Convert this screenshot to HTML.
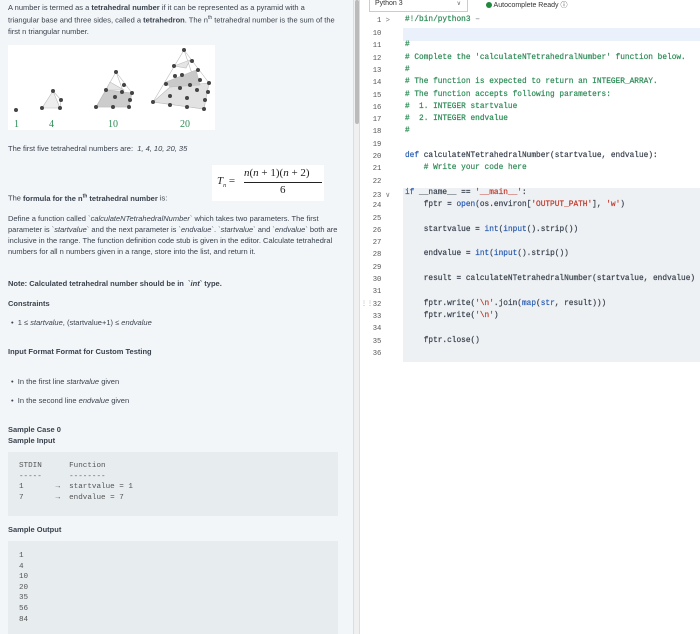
<!DOCTYPE html>
<html><head><meta charset="utf-8"><style>
*{margin:0;padding:0;box-sizing:border-box}
body{width:700px;height:634px;overflow:hidden;background:#fff;font-family:"Liberation Sans",sans-serif;position:relative}
#left{position:absolute;left:0;top:0;width:353px;height:634px;background:#f3f6f8;color:#39424e;font-size:7.5px;line-height:11px}
.p{position:absolute;left:8px;width:330px}
b{font-weight:bold}
i{font-style:italic}
.box{position:absolute;left:8px;width:330px;background:#e7ecef;font-family:"Liberation Mono",monospace;font-size:7.6px;line-height:10.6px;color:#555;padding:8px 11px;white-space:pre}
#sb{position:absolute;left:353px;top:0;width:7px;height:634px;background:#f0f0f0;border-left:1px solid #ddd;border-right:1px solid #ddd}
#sb div{position:absolute;left:1px;top:0;width:4px;height:124px;background:#bbb;border-radius:2px}
#right{position:absolute;left:361px;top:0;width:339px;height:634px;background:#fff}
.code{position:absolute;font-family:"Liberation Mono",monospace;font-size:7.8px;white-space:pre;color:#39424e;-webkit-text-stroke:0.2px}
.ln{position:absolute;left:0;width:29px;text-align:right;font-family:"Liberation Mono",monospace;font-size:7.2px;color:#555}
.c{color:#2e8b57}.k{color:#2a5db0}.s{color:#c0392b}
</style></head><body>
<div id="left">
<div class="p" style="top:2px">A number is termed as a <b>tetrahedral number</b> if it can be represented as a pyramid with a triangular base and three sides, called a <b>tetrahedron</b>. The n<sup style="font-size:5px">th</sup> tetrahedral number is the sum of the first n triangular number.</div>
<svg style="position:absolute;left:8px;top:45px" width="207" height="85" viewBox="8 45 207 85">
<rect x="8" y="45" width="207" height="85" fill="#fff"/>
<g stroke="#bbb" stroke-width="0.6" fill="none">
<polygon points="53,91 42,108 60,108" fill="#eee"/><line x1="53" y1="91" x2="61" y2="100"/><line x1="61" y1="100" x2="60" y2="108"/>
<polygon points="116,72 96,107 129,107" /><polygon points="106,90 96,107 129,107 132,93" fill="#ccc"/><polygon points="110,82 106,90 124,90" fill="#e5e5e5"/><line x1="116" y1="72" x2="132" y2="93"/>
<polygon points="184,50 153,102 204,109" /><polygon points="153,102 204,109 209,83 170,87" fill="#e2e2e2"/><polygon points="166,82 196,70 200,85 170,87" fill="#c9c9c9"/><polygon points="174,66 190,60 186,68" fill="#e5e5e5"/><line x1="184" y1="50" x2="209" y2="83"/>
</g>
<g fill="#444">
<circle cx="16" cy="110" r="2"/>
<circle cx="53" cy="91" r="2"/><circle cx="42" cy="108" r="2"/><circle cx="60" cy="108" r="2"/><circle cx="61" cy="100" r="2"/>
<circle cx="116" cy="72" r="2"/><circle cx="124" cy="85" r="2"/><circle cx="106" cy="90" r="2"/><circle cx="132" cy="93" r="2"/><circle cx="96" cy="107" r="2"/><circle cx="113" cy="107" r="2"/><circle cx="129" cy="107" r="2"/><circle cx="115" cy="97" r="2"/><circle cx="130" cy="100" r="2"/><circle cx="122" cy="92" r="2"/>
<circle cx="184" cy="50" r="2"/><circle cx="192" cy="61" r="2"/><circle cx="174" cy="66" r="2"/><circle cx="198" cy="70" r="2"/><circle cx="182" cy="75" r="2"/><circle cx="166" cy="84" r="2"/><circle cx="200" cy="80" r="2"/><circle cx="209" cy="83" r="2"/><circle cx="180" cy="88" r="2"/><circle cx="197" cy="90" r="2"/><circle cx="208" cy="92" r="2"/><circle cx="153" cy="102" r="2"/><circle cx="170" cy="96" r="2"/><circle cx="170" cy="105" r="2"/><circle cx="187" cy="98" r="2"/><circle cx="187" cy="107" r="2"/><circle cx="205" cy="100" r="2"/><circle cx="204" cy="109" r="2"/><circle cx="190" cy="85" r="2"/><circle cx="175" cy="76" r="2"/>
</g>
<g fill="#2e8b57" font-family="Liberation Serif,serif" font-size="10">
<text x="14" y="127">1</text><text x="49" y="127">4</text><text x="108" y="127">10</text><text x="180" y="127">20</text>
</g>
</svg>
<div class="p" style="top:143px">The first five tetrahedral numbers are: &nbsp;<i>1, 4, 10, 20, 35</i></div>
<div style="position:absolute;left:212px;top:165px;width:112px;height:36px;background:#fff;font-family:'Liberation Serif',serif;font-size:11px;color:#222">
<span style="position:absolute;left:5px;top:11px"><i>T</i><sub style="font-size:6px"><i>n</i></sub> =</span>
<span style="position:absolute;left:32px;top:3px"><i>n</i>(<i>n</i> + 1)(<i>n</i> + 2)</span>
<span style="position:absolute;left:32px;top:17px;width:78px;border-top:1px solid #222"></span>
<span style="position:absolute;left:68px;top:20px">6</span></div>
<div class="p" style="top:191px">The <b>formula for the n<sup style="font-size:5px">th</sup> tetrahedral number</b> is:</div>
<div class="p" style="top:213px">Define a function called `<i>calculateNTetrahedralNumber</i>` which takes two parameters. The first parameter is `<i>startvalue</i>` and the next parameter is `<i>endvalue</i>`. `<i>startvalue</i>` and `<i>endvalue</i>` both are inclusive in the range. The function definition code stub is given in the editor. Calculate tetrahedral numbers for all n numbers given in a range, store into the list, and return it.</div>
<div class="p" style="top:278px"><b>Note: Calculated tetrahedral number should be in &nbsp;`<i>int</i>` type.</b></div>
<div class="p" style="top:298px"><b>Constraints</b></div>
<div class="p" style="top:317px;left:11px">•&nbsp;&nbsp;1 ≤ <i>startvalue</i>, (startvalue+1) ≤ <i>endvalue</i></div>
<div class="p" style="top:346px"><b>Input Format Format for Custom Testing</b></div>
<div class="p" style="top:376px;left:11px">•&nbsp;&nbsp;In the first line <i>startvalue</i> given</div>
<div class="p" style="top:395px;left:11px">•&nbsp;&nbsp;In the second line <i>endvalue</i> given</div>
<div class="p" style="top:424px"><b>Sample Case 0<br>Sample Input</b></div>
<div class="box" style="top:452px;height:64px;padding-top:9px">STDIN      Function
-----      --------
1       →  startvalue = 1
7       →  endvalue = 7</div>
<div class="p" style="top:524px"><b>Sample Output</b></div>
<div class="box" style="top:541px;height:93px;padding-top:10px">1
4
10
20
35
56
84</div>
</div>
<div id="sb"><div></div></div>
<div id="right">
<div style="position:absolute;left:8px;top:-2px;width:99px;height:14px;border:1px solid #ccc;font-size:7px;color:#333;padding:1px 5px">Python 3<span style="position:absolute;right:6px;font-size:6px;color:#666">∨</span></div>
<div style="position:absolute;left:125px;top:0;font-size:7px;color:#333"><span style="display:inline-block;width:6px;height:6px;border-radius:50%;background:#1f8a3b;vertical-align:-0.5px"></span> Autocomplete Ready ⓘ</div>
<div style="position:absolute;left:42px;top:28px;width:297px;height:13px;background:#eaf1fb"></div>
<div style="position:absolute;left:42px;top:188px;width:297px;height:174px;background:#eef1f4"></div>
<div style="position:absolute;left:0;top:300px;font-size:6px;color:#999">⋮⋮</div>
<div id="lines"></div>
<div class="ln" style="top:17px">1 <span style="color:#777">&gt;</span></div><div class="code" style="left:44px;top:16px"><span class="c">#!/bin/python3</span> <span style="color:#999">–</span></div>
<script>
var L=[[10,""],[11,'<span class="c">#</span>'],[12,'<span class="c"># Complete the \'calculateNTetrahedralNumber\' function below.</span>'],[13,'<span class="c">#</span>'],[14,'<span class="c"># The function is expected to return an INTEGER_ARRAY.</span>'],[15,'<span class="c"># The function accepts following parameters:</span>'],[16,'<span class="c">#  1. INTEGER startvalue</span>'],[17,'<span class="c">#  2. INTEGER endvalue</span>'],[18,'<span class="c">#</span>'],[19,''],[20,'<span class="k">def</span> calculateNTetrahedralNumber(startvalue, endvalue):'],[21,'    <span class="c"># Write your code here</span>'],[22,''],[23,'<span class="k">if</span> __name__ == <span class="s">\'__main__\'</span>:'],[24,'    fptr = <span class="k">open</span>(os.environ[<span class="s">\'OUTPUT_PATH\'</span>], <span class="s">\'w\'</span>)'],[25,''],[26,'    startvalue = <span class="k">int</span>(<span class="k">input</span>().strip())'],[27,''],[28,'    endvalue = <span class="k">int</span>(<span class="k">input</span>().strip())'],[29,''],[30,'    result = calculateNTetrahedralNumber(startvalue, endvalue)'],[31,''],[32,'    fptr.write(<span class="s">\'\\n\'</span>.join(<span class="k">map</span>(<span class="k">str</span>, result)))'],[33,'    fptr.write(<span class="s">\'\\n\'</span>)'],[34,''],[35,'    fptr.close()'],[36,'']];
var h='';for(var j=0;j<L.length;j++){var y=30+j*12.3;h+='<div class="ln" style="top:'+y+'px">'+L[j][0]+(L[j][0]==23?' <span style="color:#777">∨</span>':'&nbsp;&nbsp;')+'</div><div class="code" style="left:44px;top:'+(y-1)+'px">'+L[j][1]+'</div>';}
document.getElementById('lines').innerHTML=h;
</script>
</div>
</body></html>
